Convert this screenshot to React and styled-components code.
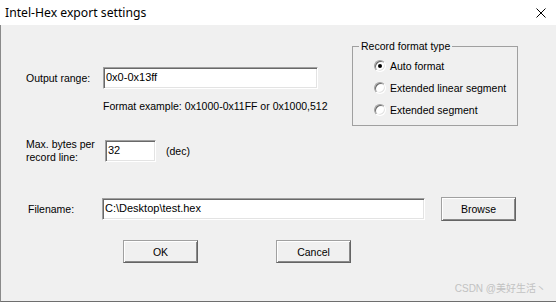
import React from 'react';
import styled, { createGlobalStyle } from 'styled-components';

const GlobalStyle = createGlobalStyle`
  html, body {
    margin: 0;
    padding: 0;
    background: #f0f0f0;
  }
`;

const Window = styled.div`
  display: flex;
  flex-direction: column;

  width: 556px;
  height: 302px;
  overflow: hidden;
  background-color: #fff;
`;

const TitleBar = styled.div`
  display: flex;
  flex: none;
  justify-content: space-between;
  align-items: center;

  height: 25px;
  padding: 0 10px 0 5px;
  box-sizing: border-box;

  color: #000;
  font-family: 'Segoe UI', 'Noto Sans', sans-serif;
  font-size: 12.2px;
  background-color: #fff;
`;

const Body = styled.div`
  position: relative;

  display: flex;
  flex: 1;
  flex-direction: column;

  padding: 15px 38px 0 25px;
  color: #000;
  font-family: 'Liberation Sans', Arial, sans-serif;
  font-size: 10.5px;

  background-color: #f0f0f0;
  border-left: 1px solid #8a8a8a;
  border-bottom: 1px solid #6e6e6e;
`;

const TopSection = styled.div`
  display: flex;
  justify-content: space-between;
  align-items: flex-start;
`;

const LeftForm = styled.div`
  display: flex;
  flex-direction: column;
  margin-top: 27px;
`;

const FieldRow = styled.div`
  display: flex;
  align-items: center;
  margin-top: ${(p) => p.$top || 0}px;
`;

const Label = styled.div`
  flex: none;
  width: ${(p) => p.$width}px;
  margin-left: ${(p) => p.$indent || 0}px;
  line-height: 13px;
`;

const Field = styled.input.attrs(() => ({
  type: 'text',
  readOnly: true,
}))`
  width: ${(p) => p.$width}px;
  height: 22px;
  box-sizing: border-box;
  padding: 0 2px 2px;

  color: #000;
  font-family: 'Liberation Sans', Arial, sans-serif;
  font-size: 11px;

  background-color: #fff;
  outline: none;
  border: 1px solid;
  border-color: #a0a0a0 #fff #fff #a0a0a0;
  box-shadow: inset 1px 1px #696969, inset -1px -1px #e3e3e3;
`;

const Hint = styled.div`
  margin: 11px 0 0 77px;
  line-height: 13px;
`;

const Unit = styled.span`
  margin-left: 10px;
`;

const GroupBox = styled.fieldset`
  width: 166px;
  margin: 0;
  padding: 2px 0 4px 21px;
  box-sizing: border-box;

  border: 1px solid #a0a0a0;
`;

const Legend = styled.legend`
  margin-left: -15px;
  padding: 0 2px;
  line-height: 13px;
`;

const RadioRow = styled.label`
  display: flex;
  align-items: center;
  gap: 4px;
  height: 22px;
`;

const RadioMark = styled.span`
  position: relative;
  flex: none;

  width: 12px;
  height: 12px;
  box-sizing: border-box;

  background-color: #fff;
  border: 1px solid;
  border-color: #a0a0a0 #fff #fff #a0a0a0;
  border-radius: 50%;
  box-shadow: inset 1px 1px #696969, inset -1px -1px #e3e3e3;

  &::after {
    content: '';
    display: ${(p) => (p.$checked ? 'block' : 'none')};
    position: absolute;
    top: 3px;
    left: 3px;
    width: 4px;
    height: 4px;
    background-color: #000;
    border-radius: 50%;
  }
`;

const Button = styled.button.attrs(() => ({
  type: 'button',
}))`
  flex: none;
  width: 75px;
  height: ${(p) => p.$height || 23}px;
  margin-left: ${(p) => p.$gap || 0}px;
  padding: 0;
  box-sizing: border-box;

  color: #000;
  font-family: 'Liberation Sans', Arial, sans-serif;
  font-size: 10.5px;

  background-color: #f0f0f0;
  border: 1px solid;
  border-color: #a0a0a0 #646464 #646464 #a0a0a0;
  box-shadow: inset 1px 1px #fff, inset -1px -1px #8a8a8a;
`;

const ButtonRow = styled.div`
  display: flex;
  margin-top: 19px;
  padding-left: 97px;
`;

const Watermark = styled.div`
  position: absolute;
  right: 10px;
  bottom: 6px;

  color: #c2c2c2;
  font-family: 'Liberation Sans', 'Noto Sans CJK SC', sans-serif;
  font-size: 10px;
`;

const CloseIcon = () => (
  <svg width="10" height="10" viewBox="0 0 10 10">
    <path d="M0.5 0.5 L9.5 9.5 M9.5 0.5 L0.5 9.5" stroke="#000" strokeWidth="1" />
  </svg>
);

const options = [
  { label: 'Auto format', checked: true },
  { label: 'Extended linear segment' },
  { label: 'Extended segment' },
];

const App = () => (
  <>
    <GlobalStyle />
    <Window>
      <TitleBar>
        <span>Intel-Hex export settings</span>
        <CloseIcon />
      </TitleBar>
      <Body>
        <TopSection>
          <LeftForm>
            <FieldRow>
              <Label $width={77}>Output range:</Label>
              <Field $width={215} defaultValue="0x0-0x13ff" />
            </FieldRow>
            <Hint>Format example: 0x1000-0x11FF or 0x1000,512</Hint>
            <FieldRow $top={25}>
              <Label $width={79}>
                Max. bytes per
                <br />
                record line:
              </Label>
              <Field $width={51} defaultValue="32" />
              <Unit>(dec)</Unit>
            </FieldRow>
          </LeftForm>
          <GroupBox>
            <Legend>Record format type</Legend>
            {options.map((o) => (
              <RadioRow key={o.label}>
                <RadioMark $checked={o.checked} />
                {o.label}
              </RadioRow>
            ))}
          </GroupBox>
        </TopSection>
        <FieldRow $top={33}>
          <Label $width={74} $indent={2}>
            Filename:
          </Label>
          <Field $width={323} defaultValue="C:\Desktop\test.hex" />
          <Button $gap={16} $height={24}>
            Browse
          </Button>
        </FieldRow>
        <ButtonRow>
          <Button>OK</Button>
          <Button $gap={78}>Cancel</Button>
        </ButtonRow>
        <Watermark>CSDN @美好生活丶</Watermark>
      </Body>
    </Window>
  </>
);

export default App;
